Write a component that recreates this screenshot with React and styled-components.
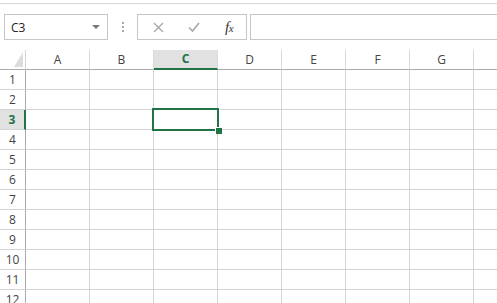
import React from 'react'
import styled, { createGlobalStyle } from 'styled-components'

const GREEN = '#217346'
const COLUMNS = ['A', 'B', 'C', 'D', 'E', 'F', 'G', '']
const ROWS = [1, 2, 3, 4, 5, 6, 7, 8, 9, 10, 11, 12]
const ACTIVE_COL = 'C'
const ACTIVE_ROW = 3

const GlobalStyle = createGlobalStyle`
    html, body {
        margin: 0;
        padding: 0;
        background: #fff;
        overflow: hidden;
    }
    body {
        font-family: "Open Sans", "Noto Sans", sans-serif;
        color: #444;
    }
`;

export default function App() {
    return (
        <Page>
            <GlobalStyle />
            <TopRule />
            <FormulaBar>
                <NameBox>
                    <NameText>C3</NameText>
                    <DropArrow />
                </NameBox>
                <Grip>
                    <Dot /><Dot /><Dot />
                </Grip>
                <FnButtons>
                    <FnButton>
                        <svg width="11" height="11" viewBox="0 0 11 11">
                            <path d="M1 1 L10 10 M10 1 L1 10" stroke="#a6a6a6" strokeWidth="1.3" fill="none" />
                        </svg>
                    </FnButton>
                    <FnButton>
                        <svg width="12" height="10" viewBox="0 0 12 10">
                            <path d="M1 5.5 L4.5 9 L11 1" stroke="#a6a6a6" strokeWidth="1.6" fill="none" />
                        </svg>
                    </FnButton>
                    <FnButton>
                        <Fx>f<small>x</small></Fx>
                    </FnButton>
                </FnButtons>
                <FormulaInput />
            </FormulaBar>

            <Sheet>
                <Corner>
                    <svg width="10" height="15" viewBox="0 0 10 15">
                        <polygon points="9,0 9,15 0,15" fill="#dcdcdc" />
                    </svg>
                </Corner>
                {COLUMNS.map((c, i) => (
                    <ColHeader key={'h' + i} active={c === ACTIVE_COL}>{c}</ColHeader>
                ))}
                {ROWS.map(r => (
                    <React.Fragment key={r}>
                        <RowHeader active={r === ACTIVE_ROW}>{r}</RowHeader>
                        {COLUMNS.map((c, i) => (
                            <Cell key={i}>
                                {r === ACTIVE_ROW && c === ACTIVE_COL && (
                                    <Selection>
                                        <FillHandle />
                                    </Selection>
                                )}
                            </Cell>
                        ))}
                    </React.Fragment>
                ))}
            </Sheet>
        </Page>
    )
}

const Page = styled.div`
    width: 497px;
    height: 303px;
    overflow: hidden;
`;

const TopRule = styled.div`
    margin-top: 3px;
    height: 1px;
    background: #d6d6d6;
`;

const FormulaBar = styled.div`
    display: flex;
    align-items: stretch;
    height: 26px;
    margin-top: 10px;
    padding-left: 4px;
`;

const NameBox = styled.div`
    box-sizing: border-box;
    width: 104px;
    border: 1px solid #c6c6c6;
    display: flex;
    align-items: center;
    justify-content: space-between;
    padding: 0 7px 0 6px;
`;

const NameText = styled.span`
    font-size: 12px;
    color: #222;
`;

const DropArrow = styled.span`
    width: 0;
    height: 0;
    border-left: 4px solid transparent;
    border-right: 4px solid transparent;
    border-top: 4px solid #777;
`;

const Grip = styled.div`
    width: 29px;
    display: flex;
    flex-direction: column;
    align-items: center;
    justify-content: center;
    gap: 2px;
`;

const Dot = styled.span`
    width: 2px;
    height: 2px;
    background: #a8a8a8;
`;

const FnButtons = styled.div`
    box-sizing: border-box;
    width: 110px;
    border: 1px solid #c6c6c6;
    display: flex;
    align-items: center;
    justify-content: space-between;
    padding: 0 10px 0 13px;
`;

const FnButton = styled.span`
    display: flex;
    align-items: center;
    justify-content: center;
    width: 14px;
    height: 14px;
`;

const Fx = styled.span`
    font-family: "Liberation Serif", serif;
    font-style: italic;
    font-size: 15px;
    color: #333;
    letter-spacing: -0.5px;

    small {
        font-size: 11px;
    }
`;

const FormulaInput = styled.div`
    flex: 1;
    margin-left: 3px;
    margin-right: -4px;
    border: 1px solid #c6c6c6;
`;

const Sheet = styled.div`
    display: grid;
    grid-template-columns: 26px repeat(7, 64px) 64px;
    grid-auto-rows: 20px;
    margin-top: 10px;
`;

const Corner = styled.div`
    box-sizing: border-box;
    border-right: 1px solid #d4d4d4;
    border-bottom: 1px solid #ababab;
    display: flex;
    align-items: flex-end;
    justify-content: flex-end;
    padding: 0 1px 2px 0;
`;

const ColHeader = styled.div`
    box-sizing: border-box;
    display: flex;
    align-items: center;
    justify-content: center;
    font-size: 12px;
    padding-bottom: 1px;
    color: ${p => p.active ? GREEN : '#444'};
    font-weight: ${p => p.active ? 700 : 400};
    background: ${p => p.active ? '#e1e1e1' : '#fff'};
    border-right: 1px solid #dadada;
    border-bottom: ${p => p.active ? `2px solid ${GREEN}` : '1px solid #ababab'};
`;

const RowHeader = styled.div`
    box-sizing: border-box;
    display: flex;
    align-items: center;
    justify-content: center;
    font-size: 12px;
    color: ${p => p.active ? GREEN : '#444'};
    font-weight: ${p => p.active ? 700 : 400};
    background: ${p => p.active ? '#e1e1e1' : '#fff'};
    border-right: ${p => p.active ? `2px solid ${GREEN}` : '1px solid #ababab'};
    border-bottom: 1px solid #d4d4d4;
`;

const Cell = styled.div`
    box-sizing: border-box;
    position: relative;
    border-right: 1px solid #d4d4d4;
    border-bottom: 1px solid #d4d4d4;
`;

const Selection = styled.div`
    position: absolute;
    top: -2px;
    left: -2px;
    right: -2px;
    bottom: -2px;
    border: 2px solid ${GREEN};
    z-index: 2;
`;

const FillHandle = styled.span`
    box-sizing: border-box;
    position: absolute;
    right: -5px;
    bottom: -5px;
    width: 7px;
    height: 7px;
    background: ${GREEN};
    border-left: 1px solid #fff;
    border-top: 1px solid #fff;
`;
